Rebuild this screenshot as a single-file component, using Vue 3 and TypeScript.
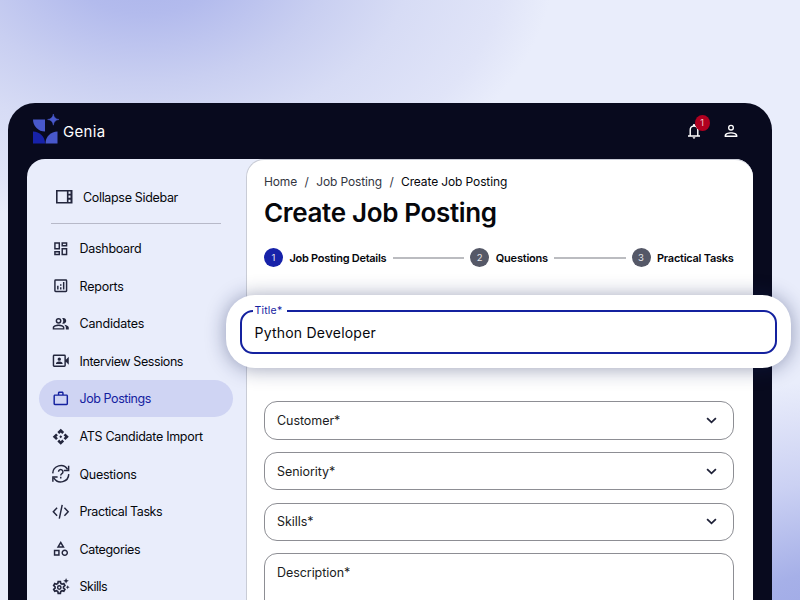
<script setup lang="ts">
interface NavItem {
  label: string
  icon: string
  tracking: number
  active?: boolean
}

const navItems: NavItem[] = [
  { label: 'Dashboard', icon: 'dashboard', tracking: -0.28 },
  { label: 'Reports', icon: 'reports', tracking: -0.22 },
  { label: 'Candidates', icon: 'candidates', tracking: -0.2 },
  { label: 'Interview Sessions', icon: 'interview', tracking: -0.4 },
  { label: 'Job Postings', icon: 'work', tracking: -0.43, active: true },
  { label: 'ATS Candidate Import', icon: 'api', tracking: -0.3 },
  { label: 'Questions', icon: 'questions', tracking: -0.26 },
  { label: 'Practical Tasks', icon: 'code', tracking: -0.42 },
  { label: 'Categories', icon: 'category', tracking: -0.36 },
  { label: 'Skills', icon: 'skills', tracking: -0.5 },
]

const fields: string[] = ['Customer*', 'Seniority*', 'Skills*']
</script>

<template>
  <div class="stage">
    <div class="device">
      <header class="topbar">
        <div class="brand">
          <svg class="logo" viewBox="0 0 26 30">
            <path d="M0 5.5H12V17.5A12 12 0 0 1 0 5.5Z" fill="#4858cb" />
            <path d="M0 17.5A12 12 0 0 1 12 29.5H0Z" fill="#1722a9" />
            <path d="M24.500 17.500V29.500H12.500A12 12 0 0 1 24.500 17.500Z" fill="#4858cb" />
            <path d="M20.300 0Q20.900 4.900 26 5.500Q20.900 6.100 20.300 11.200Q19.700 6.100 14.600 5.500Q19.700 4.900 20.300 0Z" fill="#4858cb" stroke="#4858cb" stroke-width=".5" />
          </svg>
          <span class="brand-name">Genia</span>
        </div>
        <div class="actions">
          <div class="bell">
            <svg viewBox="0 0 24 24" class="top-icon">
              <path fill="#fff" fill-rule="evenodd" d="M4 19.500v-1.700h2v-7.300c0-2.800 1.700-5.100 4.500-5.800V4a1.500 1.500 0 0 1 3 0v.7c2.800.7 4.500 3 4.500 5.800v7.300h2v1.700H4zm8 2.700c-1 0-1.800-.8-1.800-1.800h3.600c0 1-.8 1.800-1.800 1.800zM7.900 17.800h8.200v-7.300a4.100 4.100 0 0 0-8.200 0z" />
            </svg>
            <span class="badge">1</span>
          </div>
          <svg viewBox="0 0 24 24" class="top-icon">
            <path fill="#fff" fill-rule="evenodd" d="M12 3.500a4 4 0 1 1 0 8 4 4 0 0 1 0-8zm0 1.800a2.200 2.200 0 1 0 0 4.400 2.200 2.200 0 0 0 0-4.400zM3.500 20v-2.400c0-2.600 4.500-4.100 8.500-4.100s8.500 1.500 8.500 4.100V20h-17zm2-1.900h13c0-1.500-3.400-2.700-6.500-2.700s-6.500 1.200-6.500 2.700z" />
          </svg>
        </div>
      </header>

      <div class="body">
        <aside class="sidebar">
          <div class="collapse">
            <svg viewBox="0 0 17 14" class="collapse-icon">
              <path fill="#23263d" fill-rule="evenodd" d="M0 0h16.500v13.500H0zM1.600 1.600v10.300h9.300V1.600zM12.500 1.600v2.200h2V1.600zM12.500 5.600v2.200h2V5.600zM12.500 9.700v2.200h2V9.700z" />
            </svg>
            <span>Collapse Sidebar</span>
          </div>
          <nav class="nav">
            <a v-for="item in navItems" :key="item.label" class="nav-item" :class="{ active: item.active }">
              <svg viewBox="0 0 24 24" class="nav-icon">
                <path v-if="item.icon === 'dashboard'" d="M19 5v2h-4V5h4M9 5v6H5V5h4m10 8v6h-4v-6h4M9 17v2H5v-2h4M21 3h-8v6h8V3zM11 3H3v10h8V3zm10 8h-8v10h8V11zm-10 4H3v6h8v-6z" />
                <path v-else-if="item.icon === 'reports'" fill-rule="evenodd" d="M5 3h14a2 2 0 0 1 2 2v14a2 2 0 0 1-2 2H5a2 2 0 0 1-2-2V5a2 2 0 0 1 2-2zM5 5v14h14V5zM7 12h2v5H7zM15 7h2v10h-2zM11 14h2v3h-2zM11 10h2v2h-2z" />
                <path v-else-if="item.icon === 'candidates'" fill-rule="evenodd" d="M9 4a4 4 0 1 1 0 8 4 4 0 0 1 0-8zm0 2a2 2 0 1 0 0 4 2 2 0 0 0 0-4zM1 20v-2.800C1 14.500 5.500 13 9 13s8 1.500 8 4.200V20zm2-2h12v-.8c0-.9-3-2.200-6-2.200s-6 1.300-6 2.200zM14 11.700a6 6 0 0 0 0-7.400c3-1 5.500 1 5.500 3.700s-2.500 4.700-5.500 3.700zM16.500 13.200c3.300.4 6.500 1.700 6.500 4V20h-4v-2.800c0-1.700-.9-3-2.500-4z" />
                <path v-else-if="item.icon === 'interview'" fill-rule="evenodd" d="M3 3.500h14a2 2 0 0 1 2 2v5l4-4v11l-4-4v5a2 2 0 0 1-2 2H3a2 2 0 0 1-2-2v-13a2 2 0 0 1 2-2zm0 2v13h14v-13zm7 2a2.300 2.300 0 1 1 0 4.600 2.300 2.300 0 0 1 0-4.600zM5.500 16.500v-1c0-1.600 3-2.400 4.500-2.400s4.500.8 4.500 2.400v1z" />
                <path v-else-if="item.icon === 'work'" d="M14 6V4h-4v2h4zM4 8v11h16V8H4zm16-2c1.110 0 2 .89 2 2v11c0 1.110-.89 2-2 2H4c-1.110 0-2-.89-2-2l.01-11c0-1.110.88-2 1.990-2h4V4c0-1.110.89-2 2-2h4c1.110 0 2 .89 2 2v2h4z" />
                <path v-else-if="item.icon === 'api'" d="M14 12l-2 2-2-2 2-2 2 2zm-2-6l2.120 2.120 2.500-2.500L12 1 7.380 5.620l2.500 2.500L12 6zm-6 6l2.120-2.120-2.500-2.500L1 12l4.620 4.620 2.500-2.500L6 12zm12 0l-2.120 2.120 2.500 2.500L23 12l-4.620-4.620-2.500 2.500L18 12zm-6 6l-2.120-2.120-2.500 2.500L12 23l4.620-4.620-2.500-2.500L12 18z" />
                <g v-else-if="item.icon === 'questions'" class="line">
                  <path d="M1 11.500A11 11 0 0 1 21.300 6M23 12.500A11 11 0 0 1 2.700 18M22.800 1V7.500h-6.500M1.200 23V16.500h6.500" />
                  <path d="M9 9.300a3 3 0 1 1 4.600 2.500c-1.100.8-1.600 1.300-1.600 2.500M12 16.200v2.200" />
                </g>
                <path v-else-if="item.icon === 'code'" class="line" d="M7 6.500L1.800 12 7 17.500M17 6.500L22.200 12 17 17.500M14 2.500l-4 19" />
                <path v-else-if="item.icon === 'category'" d="M12 1.500l-5.500 9h11L12 1.500zm0 3.840L13.930 8.500h-3.870L12 5.340zM17.500 13c-2.490 0-4.500 2.010-4.500 4.500s2.010 4.500 4.500 4.500 4.500-2.010 4.500-4.500-2.010-4.500-4.500-4.500zm0 7c-1.380 0-2.500-1.120-2.500-2.500s1.120-2.500 2.500-2.500 2.500 1.120 2.500 2.500-1.120 2.500-2.500 2.500zM2.500 21.500h8v-8h-8v8zm2-6h4v4h-4v-4z" />
                <g v-else>
                  <path class="line heavy" d="M8.500 5h3l.5 2.500 1.800 1 2.400-.8 1.500 2.600-1.900 1.700v2l1.900 1.700-1.500 2.600-2.400-.8-1.800 1-.5 2.500h-3L8 18.500l-1.800-1-2.400.8-1.500-2.600L4.200 14v-2l-1.900-1.700 1.500-2.600 2.400.8 1.800-1z" />
                  <circle class="line" cx="10" cy="13" r="2.300" />
                  <path d="M19.300 0l1.100 2.800 2.800 1.100-2.800 1.100-1.100 2.800-1.100-2.800-2.800-1.100 2.800-1.100zM21.500 9.800l.8 2 2 .8-2 .8-.8 2-.8-2-2-.8 2-.8z" />
                </g>
              </svg>
              <span :style="{ letterSpacing: item.tracking + 'px' }">{{ item.label }}</span>
            </a>
          </nav>
        </aside>

        <main class="content">
          <div class="crumbs">
            <span>Home</span><span class="sep">/</span><span class="mid">Job Posting</span><span class="sep">/</span><span class="current">Create Job Posting</span>
          </div>
          <h1>Create Job Posting</h1>
          <div class="stepper">
            <span class="dot on">1</span><span class="step details">Job Posting Details</span>
            <span class="rule"></span>
            <span class="dot">2</span><span class="step questions">Questions</span>
            <span class="rule"></span>
            <span class="dot">3</span><span class="step tasks">Practical Tasks</span>
          </div>
          <div class="form">
            <div v-for="f in fields" :key="f" class="field">
              <span>{{ f }}</span>
              <svg viewBox="0 0 10 6" class="chevron"><path d="M1 .8L5 4.700 9 .8" /></svg>
            </div>
            <div class="field area"><span>Description*</span></div>
          </div>
        </main>
      </div>
    </div>

    <div class="focus-card">
      <fieldset class="title-field">
        <legend>Title*</legend>
        <span>Python Developer</span>
      </fieldset>
    </div>
  </div>
</template>

<style>
body {
  overflow: hidden;
}
</style>

<style scoped>
* {
  box-sizing: border-box;
}
.stage {
  position: relative;
  width: 800px;
  height: 600px;
  overflow: hidden;
  padding: 102.500px 28.5px 0 8px;
  font-family: 'Inter', 'Liberation Sans', sans-serif;
  color: #06070c;
  background:
    radial-gradient(ellipse 400px 290px at 850px 670px, #98a3e4 0%, #a6b0e8 35%, #cbd1f3 65%, #dfe3f8 88%, rgba(232, 236, 250, 0) 100%),
    radial-gradient(ellipse 410px 270px at 145px -40px, #aab3ea 0%, #b3bbed 20%, #c9cff1 45%, #d7dcf5 65%, #e0e4f8 88%, rgba(232, 236, 250, 0) 100%),
    #e9edfb;
}
.device {
  height: 530px;
  padding: 0 19px 0 18.500px;
  border-radius: 27px;
  background: #080a1e;
}
.topbar {
  height: 56.500px;
  display: flex;
  justify-content: space-between;
  align-items: center;
  padding: 0 13px 0 6.500px;
}
.brand {
  display: flex;
  align-items: center;
  gap: 4px;
}
.logo {
  width: 26px;
  height: 30px;
  margin-top: -4.500px;
}
.brand-name {
  margin-top: 1px;
  color: #fff;
  font-size: 15px;
  letter-spacing: 0.3px;
}
.actions {
  display: flex;
  gap: 19px;
}
.top-icon {
  display: block;
  width: 18px;
  height: 18px;
}
.bell {
  position: relative;
}
.badge {
  position: absolute;
  left: 10px;
  top: -6.500px;
  width: 15px;
  height: 16px;
  border-radius: 50%;
  background: #b00020;
  color: #f3c9d0;
  font-size: 9px;
  line-height: 15px;
  text-align: center;
}
.body {
  height: 470px;
  display: flex;
  background: #e9edfb;
  border-radius: 18px;
}
.sidebar {
  width: 219px;
  padding: 25px 13px 0 12.500px;
}
.collapse {
  height: 39.500px;
  margin: 0 12px 6px 12px;
  padding: 0 0 12px 5px;
  display: flex;
  align-items: center;
  gap: 10px;
  border-bottom: 1px solid #b7b9c8;
  font-size: 12.500px;
  letter-spacing: -0.33px;
}
.collapse-icon {
  width: 17px;
  height: 14px;
}
.nav-item {
  height: 37.600px;
  padding-left: 13px;
  display: flex;
  align-items: center;
  gap: 10px;
  border-radius: 19px;
  font-size: 12.500px;
}
.nav-item span {
  padding-top: 0.5px;
}
.nav-item.active {
  background: #cfd4f3;
  color: #14219f;
}
.nav-icon {
  width: 17.500px;
  height: 17.500px;
  fill: #23263d;
  flex: none;
  overflow: visible;
}
.active .nav-icon {
  fill: #14219f;
}
.line {
  fill: none;
  stroke: #23263d;
  stroke-width: 2;
}
.heavy {
  stroke-width: 2.300;
}
.content {
  flex: 1;
  padding: 14px 19px 0 17.500px;
  background: #fff;
  border-left: 1px solid #c9ccd6;
  border-top: 1px solid #c9ccd6;
  border-radius: 18px 18px 0 0;
}
.crumbs {
  height: 14px;
  display: flex;
  align-items: center;
  font-size: 12px;
  letter-spacing: -0.12px;
  color: #34363f;
  white-space: nowrap;
}
.sep {
  width: 19px;
  text-align: center;
}
.current {
  color: #06070c;
}
h1 {
  margin: 8px 0 0;
  font-size: 26px;
  line-height: 34px;
  font-weight: 600;
  letter-spacing: -0.34px;
  color: #06070b;
  white-space: nowrap;
}
.stepper {
  margin-top: 18px;
  height: 19px;
  display: flex;
  align-items: center;
  font-size: 11px;
  font-weight: 600;
  white-space: nowrap;
}
.dot {
  width: 19px;
  height: 19px;
  border-radius: 50%;
  background: #555867;
  color: #e6e7ec;
  font-size: 9.500px;
  font-weight: 400;
  line-height: 19px;
  text-align: center;
}
.dot.on {
  background: #1722a9;
}
.step {
  margin-left: 6.500px;
}
.details {
  width: 97px;
  letter-spacing: -0.28px;
}
.questions {
  width: 52px;
  letter-spacing: -0.2px;
}
.tasks {
  width: 76.500px;
  letter-spacing: -0.26px;
}
.rule {
  flex: 1;
  height: 2px;
  margin: 1px 6px 0 6.500px;
  background: #bbbcc0;
}
.form {
  margin-top: 134px;
  display: flex;
  flex-direction: column;
  gap: 12.300px;
}
.field {
  height: 38.500px;
  padding: 0 16px 0 12px;
  display: flex;
  align-items: center;
  justify-content: space-between;
  border: 1px solid #8d8e94;
  border-radius: 13px;
  font-size: 12.500px;
  letter-spacing: -0.06px;
  color: #1b1c22;
}
.area {
  height: 110px;
  align-items: flex-start;
  padding-top: 10.500px;
}
.chevron {
  width: 11px;
  height: 7px;
  fill: none;
  stroke: #1f2238;
  stroke-width: 1.600;
}
.focus-card {
  position: absolute;
  left: 226px;
  top: 295px;
  width: 565px;
  height: 73px;
  padding: 8px 14px 14px;
  border-radius: 29px;
  background: #fff;
  box-shadow: 0 1px 20px rgba(20, 30, 85, 0.42);
}
.title-field {
  height: 51px;
  margin: 0;
  padding: 0 12.500px;
  border: 2px solid #14219f;
  border-radius: 13px;
  font-size: 14px;
}
.title-field legend {
  margin-left: -2px;
  padding: 0 4.500px 0 2px;
  color: #14219f;
  font-size: 10.500px;
  letter-spacing: 0.2px;
  line-height: 15px;
}
.title-field span {
  display: block;
  margin-top: 5.500px;
  line-height: 18px;
  letter-spacing: 0.22px;
}
</style>
